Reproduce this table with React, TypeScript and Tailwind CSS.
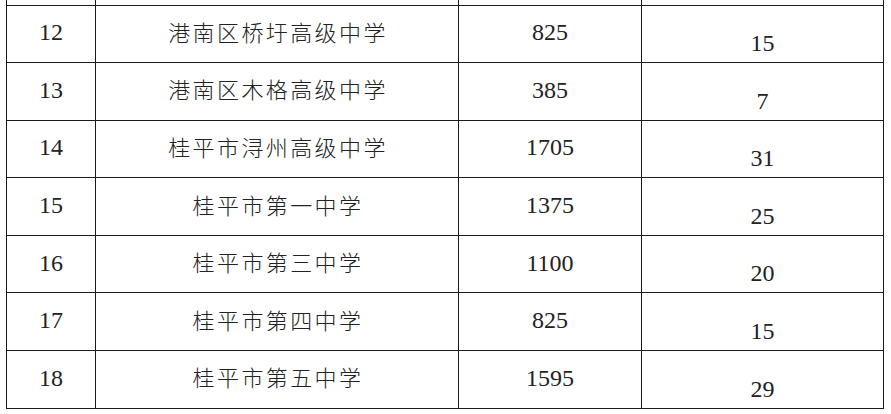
const rows = [
  { no: '12', name: '港南区桥圩高级中学', total: '825', quota: '15' },
  { no: '13', name: '港南区木格高级中学', total: '385', quota: '7' },
  { no: '14', name: '桂平市浔州高级中学', total: '1705', quota: '31' },
  { no: '15', name: '桂平市第一中学', total: '1375', quota: '25' },
  { no: '16', name: '桂平市第三中学', total: '1100', quota: '20' },
  { no: '17', name: '桂平市第四中学', total: '825', quota: '15' },
  { no: '18', name: '桂平市第五中学', total: '1595', quota: '29' },
]

const cell = 'border border-[#1a1a1a] p-0 text-center'

function Num({ v }: { v: string }) {
  return <span className="inline-block font-['Liberation_Serif'] text-[24px] leading-none">{v}</span>
}

export default function App() {
  return (
    <main className="w-[891px] h-[414px] bg-white overflow-hidden text-[#222] font-['Liberation_Serif','Noto_Sans_CJK_SC',serif]">
      <div className="pl-[6px]">
        <table className="border-collapse table-fixed w-[877px]">
          <colgroup>
            <col className="w-[89px]" />
            <col className="w-[363px]" />
            <col className="w-[183px]" />
            <col className="w-[242px]" />
          </colgroup>
          <tbody>
            <tr className="h-[5px]">
              <td className={`${cell} border-t-0`} />
              <td className={`${cell} border-t-0`} />
              <td className={`${cell} border-t-0`} />
              <td className={`${cell} border-t-0`} />
            </tr>
            {rows.map(r => (
              <tr key={r.no} className="h-[57.6px]">
                <td className={cell}><Num v={r.no} /></td>
                <td className={cell}>
                  <span className="inline-block pl-[2px] font-['Noto_Sans_CJK_SC'] font-light text-[22px] leading-none tracking-[2.4px]">{r.name}</span>
                </td>
                <td className={cell}><Num v={r.total} /></td>
                <td className={`${cell} align-bottom pb-[4px]`}><Num v={r.quota} /></td>
              </tr>
            ))}
          </tbody>
        </table>
      </div>
    </main>
  )
}
